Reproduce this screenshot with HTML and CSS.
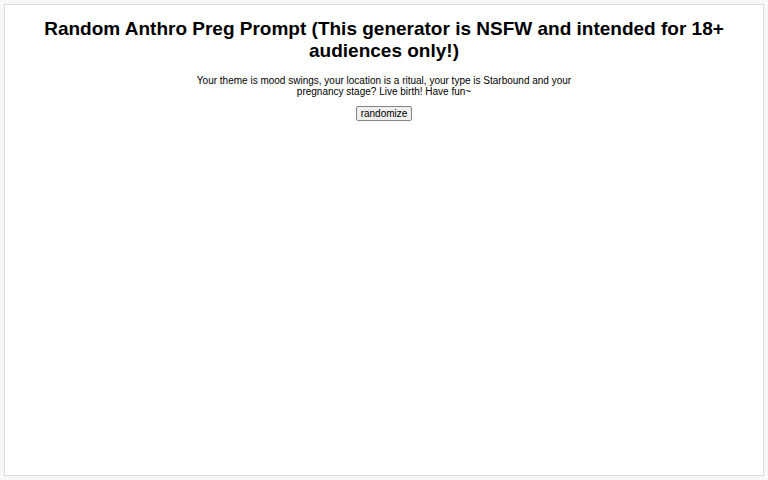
FILE: index.html
```html
<!DOCTYPE html>
<html lang="en">
<head>
  <meta charset="utf-8">
  <title>Random Anthro Preg Prompt</title>
  <link rel="stylesheet" href="styles.css">
</head>
<body>

<main class="panel">
  <h1 class="title">Random Anthro Preg Prompt (This generator is NSFW and intended for 18+ audiences only!)</h1>
  <p class="output">Your theme is mood swings, your location is a ritual, your type is Starbound and your pregnancy stage? Live birth! Have fun~</p>
  <button type="button" class="randomize">randomize</button>
</main>

</body>
</html>
```
FILE: styles.css
```css
* {
  box-sizing: border-box;
}

body {
  display: flex;
  min-height: 100vh;
  margin: 0;
  padding: 4px;
  background: #f7f7f7;
  color: #000;
  font-family: "Liberation Sans", Arial, sans-serif;
  font-size: 10px;
}

.panel {
  flex: 1;
  padding: 13px 0;
  background: #fff;
  border: 1px solid #ddd;
  text-align: center;
}

.title {
  margin: 0 20px 13px;
  font-size: 19px;
  line-height: 22px;
}

.output {
  width: 50%;
  margin: 0 auto 9px;
  line-height: 11px;
}

.randomize {
  padding: 1px 4px;
  background: #efefef;
  border: 1px solid #858585;
  border-radius: 2px;
  color: #000;
  font-family: inherit;
  font-size: 10px;
  line-height: 11px;
}
```
